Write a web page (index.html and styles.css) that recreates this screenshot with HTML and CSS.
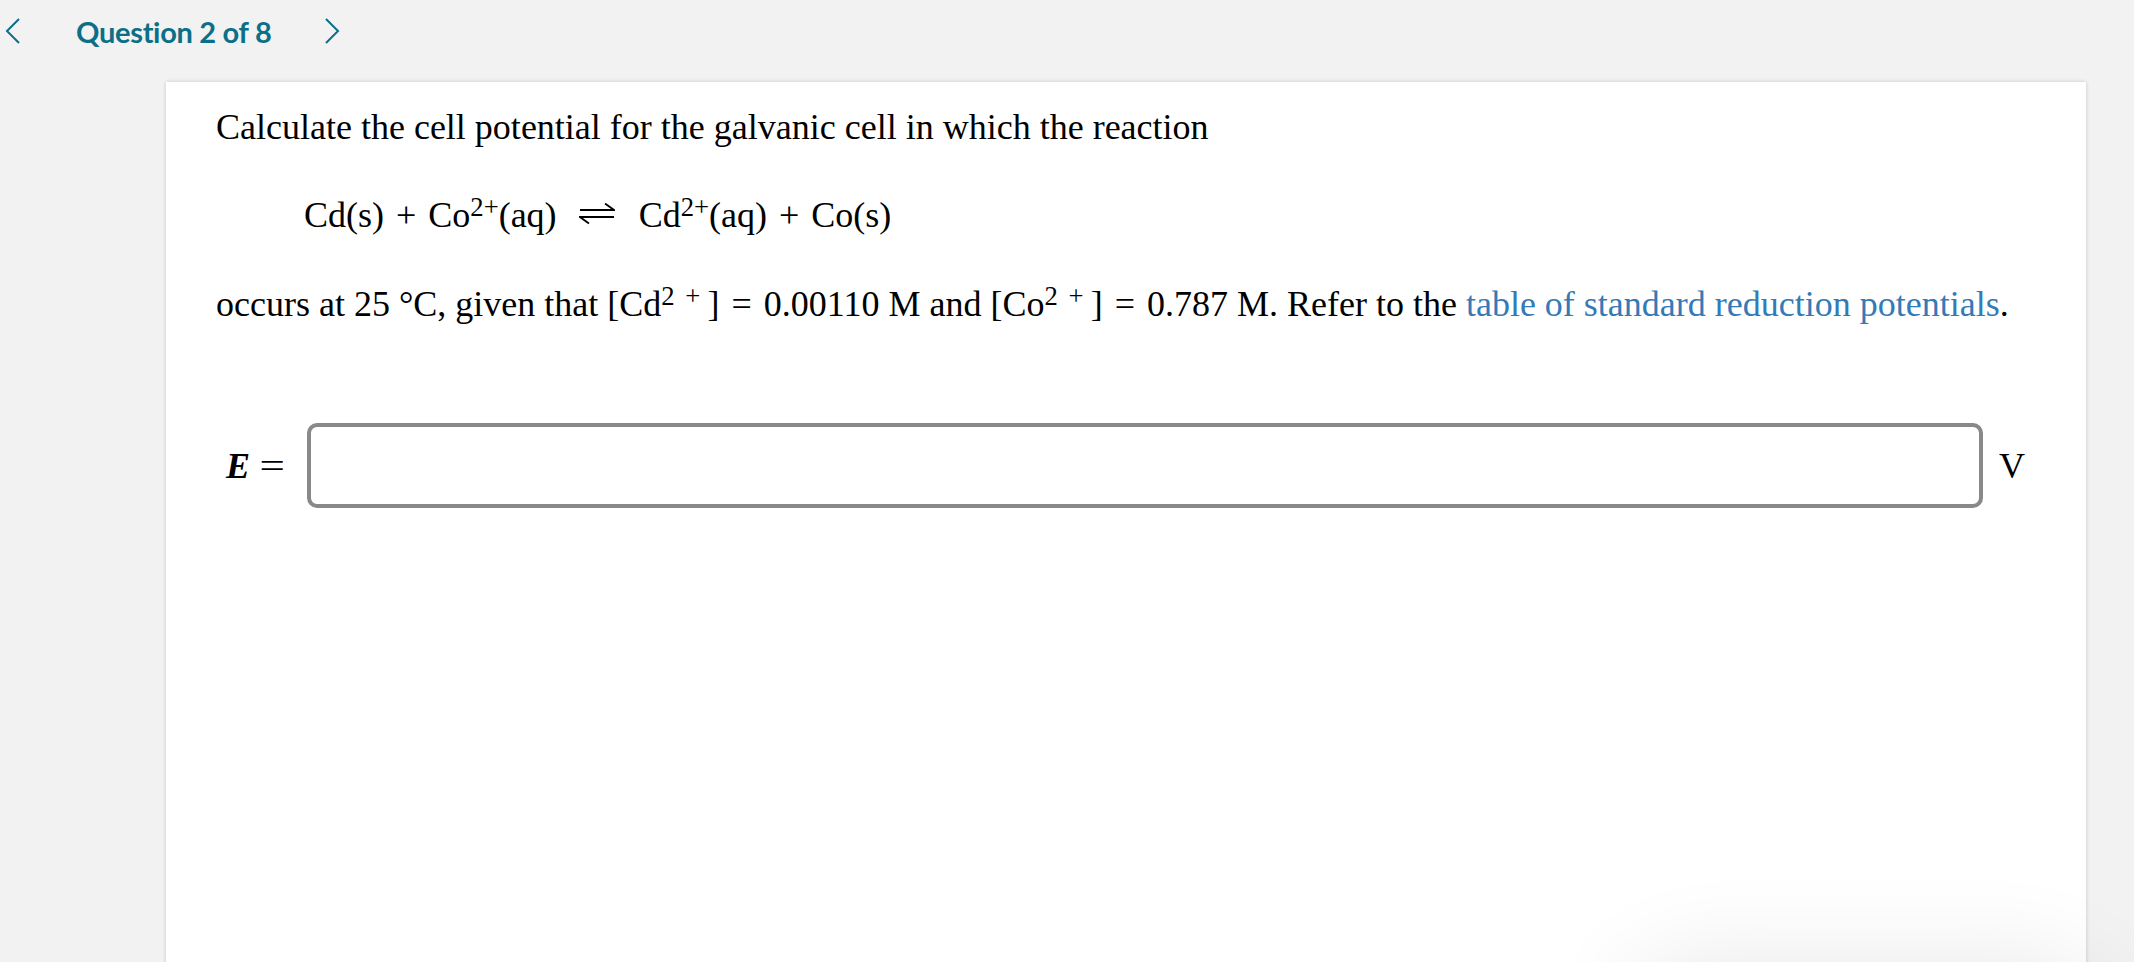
FILE: index.html
```html
<!DOCTYPE html>
<html>
<head>
<meta charset="utf-8">
<link rel="stylesheet" href="styles.css">
</head>
<body>
<header class="topbar">
  <button class="nav-btn prev" aria-label="Previous">
    <svg width="16" height="26" viewBox="0 0 16 26"><path d="M14 1 L2 13 L14 25" fill="none" stroke="#0b6f87" stroke-width="2"/></svg>
  </button>
  <span class="q-title">Question 2 of 8</span>
  <button class="nav-btn next" aria-label="Next">
    <svg width="16" height="26" viewBox="0 0 16 26"><path d="M2 1 L14 13 L2 25" fill="none" stroke="#0b6f87" stroke-width="2"/></svg>
  </button>
</header>
<main class="card">
  <p class="para">Calculate the cell potential for the galvanic cell in which the reaction</p>
  <p class="para equation">Cd(s)<span class="op">+</span>Co<sup>2+</sup>(aq)<svg class="eq-arrow" width="36" height="22" viewBox="0 0 36 22"><path d="M1 7 H35 L26 0.5 M35 14 H1 L10 20.5" fill="none" stroke="#000" stroke-width="1.8"/></svg>Cd<sup>2+</sup>(aq)<span class="op">+</span>Co(s)</p>
  <p class="para conditions">occurs at 25 °C, given that [Cd<sup class="sp">2 +</sup>&#8201;]<span class="rel">=</span>0.00110 M and [Co<sup class="sp">2 +</sup>&#8201;]<span class="rel">=</span>0.787 M. Refer to the <a class="link" href="#">table of standard reduction potentials</a>.</p>
  <div class="answer">
    <span class="label"><i>E</i><span class="eq">=</span></span>
    <input class="field" type="text">
    <span class="unit">V</span>
  </div>
</main>
<div class="float-shadow"></div>
</body>
</html>
```
FILE: styles.css
```css
html, body {
  margin: 0;
  padding: 0;
  background: #f2f2f2;
  overflow: hidden;
  height: 100%;
}
.topbar {
  height: 62px;
  display: flex;
  align-items: center;
  padding-left: 5px;
}
.nav-btn {
  background: none;
  border: none;
  padding: 0;
  width: 16px;
  height: 26px;
  display: flex;
}
.q-title {
  font-family: Lato, "Open Sans", sans-serif;
  font-weight: 700;
  font-size: 29px;
  color: #0b6f87;
  margin-left: 55px;
  margin-right: 53px;
  letter-spacing: -0.3px;
}
.card {
  margin: 20px 0 0 166px;
  width: 1920px;
  min-height: 960px;
  box-sizing: border-box;
  background: #fff;
  box-shadow: 0 0 4px rgba(0,0,0,0.18);
  padding: 20px 50px 0 50px;
  font-family: "Liberation Serif", "Times New Roman", serif;
  font-size: 36px;
  color: #000;
  position: relative;
  overflow: hidden;
}
.para {
  margin: 0;
  line-height: 50px;
}
.equation {
  margin-top: 38px;
  padding-left: 88px;
}
.op {
  margin: 0 12px;
}
.conditions {
  margin-top: 39px;
}
.rel {
  margin: 0 12px;
}
sup {
  font-size: 0.74em;
  vertical-align: 0.42em;
  line-height: 0;
}
sup.sp {
  word-spacing: 4px;
}
.eq-arrow {
  vertical-align: 2px;
  margin: 0 24px 0 22px;
}
.link {
  color: #337ab7;
  text-decoration: none;
}
.answer {
  display: flex;
  align-items: center;
  margin-top: 94px;
  padding-left: 10px;
}
.label {
  width: 81px;
}
.label i {
  font-style: italic;
  font-weight: 600;
}
.label .eq {
  display: inline-block;
  margin-left: 12px;
  transform: scaleX(1.25);
}
.field {
  width: 1676px;
  height: 85px;
  box-sizing: border-box;
  border: 4px solid #898989;
  border-radius: 10px;
  background: #fff;
  outline: none;
  font-size: 30px;
}
.unit {
  margin-left: 16px;
}
.float-shadow {
  position: fixed;
  right: 40px;
  bottom: -150px;
  width: 460px;
  height: 140px;
  border-radius: 70px;
  background: transparent;
  box-shadow: 0 0 90px 20px rgba(0,0,0,0.08);
}
```
